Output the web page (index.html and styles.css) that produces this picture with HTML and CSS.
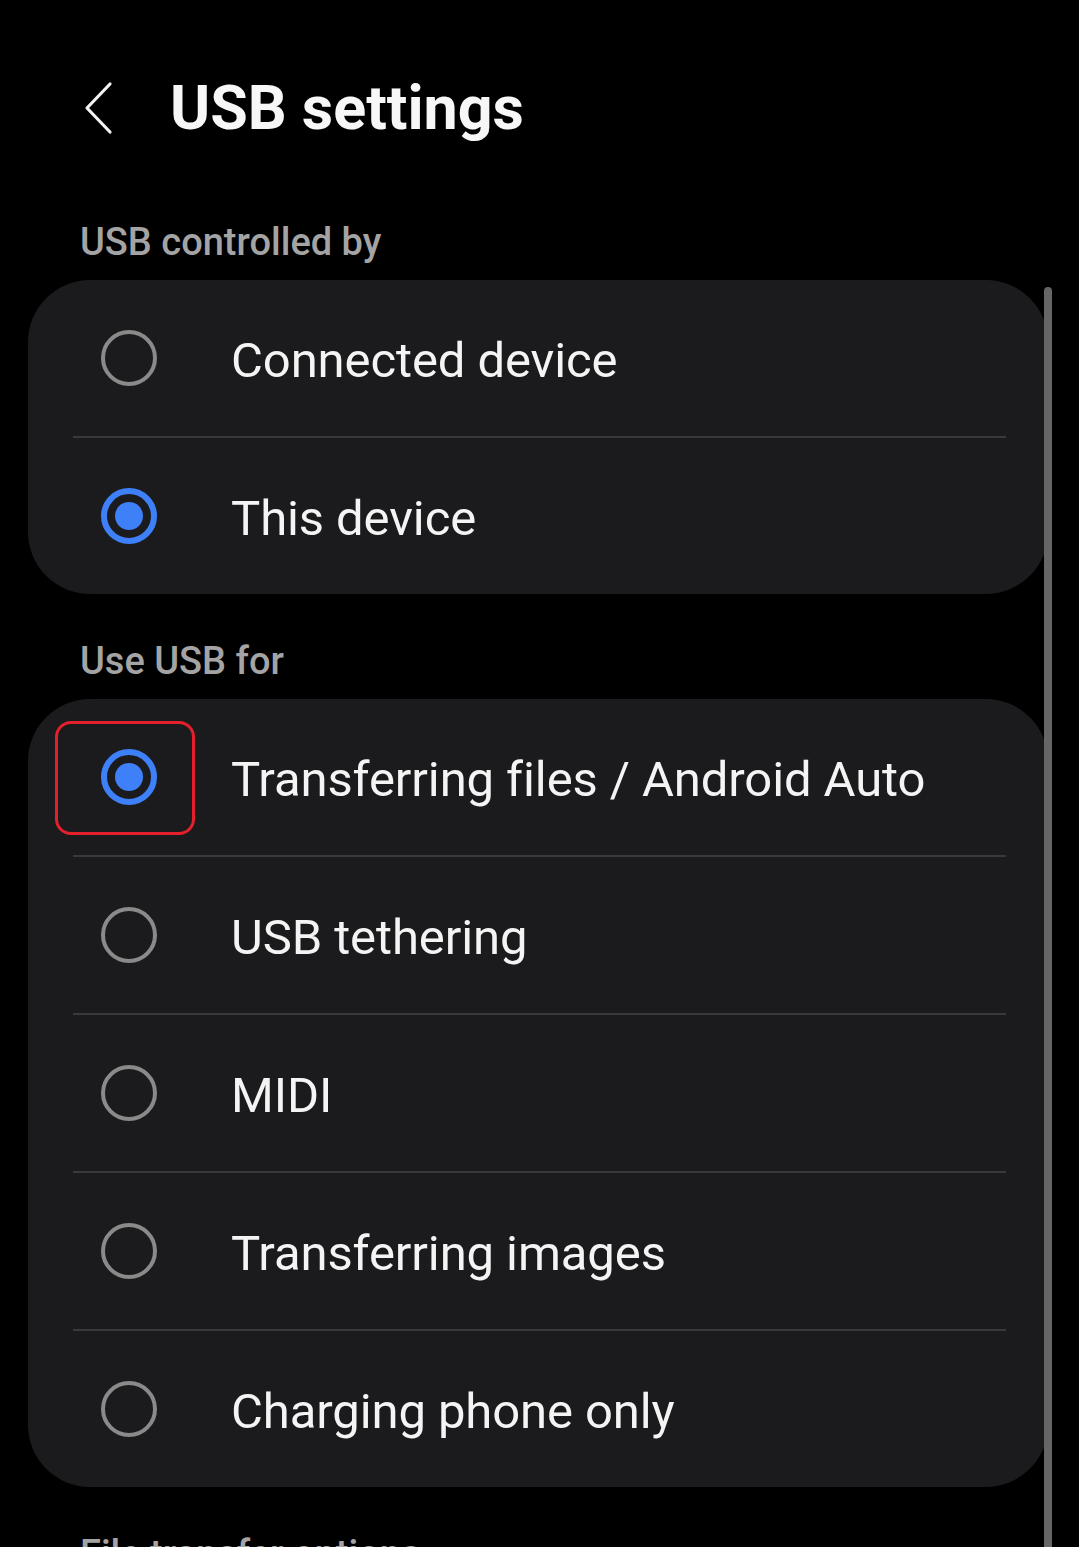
FILE: index.html
```html
<!DOCTYPE html>
<html lang="en">

<head>
    <meta charset="UTF-8">
    <meta name="viewport" content="width=device-width, initial-scale=1.0">
    <title>USB settings</title>
    <link rel="stylesheet" href="styles.css">
</head>

<body>
    <!-- Top bar with back button and title -->
    <div class="header">
        <button class="back" aria-label="Back">
            <svg width="32" height="54" viewBox="0 0 32 54">
                <polyline points="27,3 4,27 27,51" fill="none" stroke="#f2f2f2" stroke-width="3.2" stroke-linecap="round" stroke-linejoin="round" />
            </svg>
        </button>
        <h1 class="title">USB settings</h1>
    </div>

    <div class="section-label first">USB controlled by</div>
    <div class="card">
        <div class="row">
            <span class="radio"></span>
            <span class="row-text">Connected device</span>
        </div>
        <div class="divider"></div>
        <div class="row">
            <span class="radio checked"></span>
            <span class="row-text">This device</span>
        </div>
    </div>

    <div class="section-label">Use USB for</div>
    <div class="card">
        <div class="row">
            <span class="highlight">
                <span class="radio checked"></span>
            </span>
            <span class="row-text">Transferring files / Android Auto</span>
        </div>
        <div class="divider"></div>
        <div class="row">
            <span class="radio"></span>
            <span class="row-text">USB tethering</span>
        </div>
        <div class="divider"></div>
        <div class="row">
            <span class="radio"></span>
            <span class="row-text">MIDI</span>
        </div>
        <div class="divider"></div>
        <div class="row">
            <span class="radio"></span>
            <span class="row-text">Transferring images</span>
        </div>
        <div class="divider"></div>
        <div class="row">
            <span class="radio"></span>
            <span class="row-text">Charging phone only</span>
        </div>
    </div>

    <div class="section-label">File transfer options</div>

    <!-- Scroll indicator on the right edge -->
    <div class="scrollbar"></div>
</body>

</html>
```

FILE: styles.css
```css
/* Dark settings screen */
html,
body {
    margin: 0;
    background-color: #000;
    height: 1547px;
    overflow: hidden;
}

body {
    font-family: Roboto, "Noto Sans", sans-serif;
    color: #f4f4f4;
    position: relative;
}

.header {
    height: 216px;
    display: flex;
    align-items: center;
}

.back {
    background: none;
    border: none;
    padding: 0;
    margin-left: 83px;
    width: 32px;
    height: 54px;
    display: flex;
}

.title {
    margin: 0 0 0 55px;
    font-size: 61px;
    font-weight: 700;
    color: #f7f7f7;
}

.section-label {
    padding: 41px 0 0 80px;
    font-size: 38px;
    font-weight: 500;
    line-height: 52px;
    padding-bottom: 12px;
    color: #a4a4a4;
}

.section-label.first {
    padding-top: 0;
}

.card {
    margin-left: 28px;
    width: 1020px;
    background-color: #1b1b1d;
    border-radius: 62px;
}

.row {
    height: 156px;
    display: flex;
    align-items: center;
    padding-left: 73px;
}

.row-text {
    margin-left: 74px;
    font-size: 49px;
    letter-spacing: -0.1px;
    padding-top: 4px;
}

.divider {
    height: 2px;
    margin: 0 42px 0 45px;
    background-color: #39393b;
}

/* Radio buttons */
.radio {
    box-sizing: border-box;
    width: 56px;
    height: 56px;
    border: 4px solid #8a8a8a;
    border-radius: 50%;
    flex-shrink: 0;
    position: relative;
}

.radio.checked {
    border: 6px solid #3d80f8;
}

.radio.checked::after {
    content: "";
    position: absolute;
    left: 8px;
    top: 8px;
    width: 28px;
    height: 28px;
    border-radius: 50%;
    background-color: #3d80f8;
}

/* Red annotation box round the first radio */
.highlight {
    position: relative;
    display: flex;
}

.highlight::before {
    content: "";
    position: absolute;
    left: -46px;
    top: -28px;
    width: 134px;
    height: 108px;
    border: 3px solid #e3202b;
    border-radius: 16px;
}

.scrollbar {
    position: absolute;
    left: 1044px;
    top: 287px;
    width: 8px;
    height: 1300px;
    background-color: #666;
    border-radius: 4px 4px 0 0;
}
```
